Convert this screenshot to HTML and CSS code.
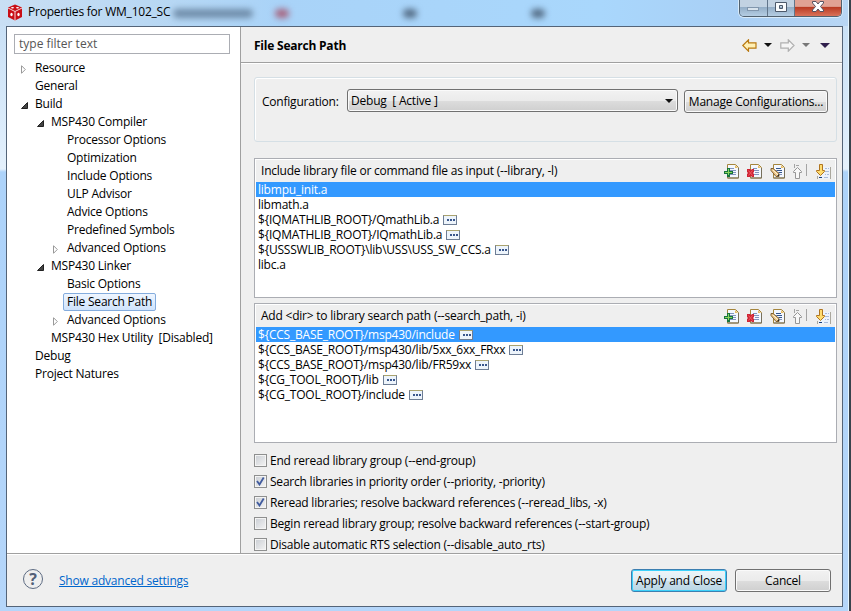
FILE: index.html
```html
<!DOCTYPE html>
<html lang="en">
<head>
  <meta charset="utf-8">
  <title>Properties for WM_102_SC</title>
  <link rel="stylesheet" href="styles.css">
</head>
<body>
  <!-- icons used more than once -->
  <svg class="sprites" width="0" height="0">
    <symbol id="page" viewBox="0 0 15 15">
      <path d="M3.5.5h8l3 3v10.500h-11z" fill="#f4f8ff" stroke="#a5853c"/>
      <path d="M14.500 4v10h-11" fill="none" stroke="#77705c"/>
      <path d="M11 1v3h3z" fill="#e8bd65"/>
      <path d="M6 4.500h4M6 6.500h6M8 8.500h4M6 10.500h6" stroke="#8294bd"/>
    </symbol>
    <symbol id="add" viewBox="0 0 15 15">
      <use href="#page"/>
      <path d="M3 4h3v3h3v3h-3v3h-3v-3h-3v-3h3z" fill="#16743d"/>
      <path d="M4.500 5v6M1 8.500h7" stroke="#8bd45d"/>
    </symbol>
    <symbol id="delete" viewBox="0 0 15 15">
      <use href="#page"/>
      <path d="M0 5h3l1 1 1-1h2v3l-1 1 1 1v3h-2l-1-1-1 1h-3v-3l1-1-1-1z" fill="#cf2435"/>
      <path d="M1.500 6.500l4 5m0-5l-4 5" stroke="#f15860"/>
    </symbol>
    <symbol id="edit" viewBox="0 0 15 15">
      <use href="#page"/>
      <path d="M6 4.500h5M7 6.500h5M9 8.500h3" stroke="#34558c"/>
      <path d="M1 4.500h2l6 5v3h-3l-5-6z" fill="#edc88c" stroke="#806031"/>
      <path d="M3 6l5 5" stroke="#fff1cf"/>
      <path d="M7 12h2v-2z" fill="#222"/>
    </symbol>
    <symbol id="up" viewBox="0 0 15 15">
      <path d="M1.500 0v4M3 1.500h3M13.500 0v12" stroke="#a4a4a4" fill="none"/>
      <path d="M4.500 3.500l4 4v1h-2v6h-4v-6h-2v-1z" fill="#f8f8f8" stroke="#969696"/>
    </symbol>
    <symbol id="down" viewBox="0 0 15 15">
      <path d="M4 3h11v12h-12z" fill="#edf3fc"/>
      <path d="M1.500 12v3M14.500 3v12" stroke="#aaa79d"/>
      <path d="M9 4.500h2M12 4.500h1M9 7.500h4M9 10.500h1M11 10.500h2M8 13.500h4" stroke="#a9bbda"/>
      <path d="M3 13.500h3" stroke="#193f79"/>
      <path d="M3.500.500h3v6h2v1l-4 4-4-4v-1h3z" fill="#ffdc70" stroke="#b07520"/>
    </symbol>
    <symbol id="open" viewBox="0 0 7 7"><path d="M.5 6.500l6-6v6z" fill="#444" stroke="#222"/></symbol>
    <symbol id="closed" viewBox="0 0 5 9"><path d="M.5.700v7.600l3.800-3.800z" fill="#fff" stroke="#999"/></symbol>
    <symbol id="caret" viewBox="0 0 8 4"><path d="M0 0h8l-4 4z" fill="currentColor"/></symbol>
    <symbol id="tick" viewBox="0 0 9 9"><path d="M1 4l2.500 3.500l4.200-7" fill="none" stroke="#405b9e" stroke-width="1.800"/></symbol>
  </svg>

  <div class="window">
    <header class="titlebar">
      <svg class="app-icon" width="16" height="17" viewBox="0 0 16 17">
        <path d="M8 .5l7 3v9.500l-7 3.500-7-3.500v-9.500z" fill="#c90f17"/>
        <path d="M1 4l7 3.500 7-3.500M8 7.500v9" fill="none" stroke="#f6d5d8"/>
        <ellipse cx="5.500" cy="3.800" rx="1.500" ry=".8" fill="#fff"/><ellipse cx="10.500" cy="3.800" rx="1.500" ry=".8" fill="#fff"/>
        <ellipse cx="4.500" cy="10.500" rx="1.200" ry="1.800" fill="#fff"/><ellipse cx="11.500" cy="10.500" rx="1.200" ry="1.800" fill="#fff"/>
      </svg>
      <span class="title">Properties for WM_102_SC</span>
      <div class="smudges"><i></i><i class="red"></i><i></i><i></i></div>
      <div class="controls">
        <span class="control"><svg width="13" height="5"><rect x=".5" y=".5" width="11" height="3" fill="#d8e3ed" stroke="#8196ad"/></svg></span>
        <span class="control maximize"><svg width="12" height="10"><path d="M.5.500h11v9h-11zM4.500 3.500h3v3h-3z" fill="#f9fbfd" fill-rule="evenodd" stroke="#4c596a"/></svg></span>
        <span class="control close"><svg width="12" height="11" viewBox="0 0 12 11"><path d="M.5.500h3.500l2 2.500 2-2.500h3.500v1.500l-3 3.500 3 3.500v1.500h-3.500l-2-2.500-2 2.500h-3.500v-1.500l3-3.500-3-3.500z" fill="#fff" stroke="#565261"/></svg></span>
      </div>
    </header>

    <div class="client">
      <div class="panes">
        <nav class="sidebar">
          <div class="filter">type filter text</div>
          <ul class="tree">
            <li><svg class="closed"><use href="#closed"/></svg><span>Resource</span></li>
            <li><span>General</span></li>
            <li><svg class="open"><use href="#open"/></svg><span>Build</span></li>
            <li class="l2"><svg class="open"><use href="#open"/></svg><span>MSP430 Compiler</span></li>
            <li class="l3"><span>Processor Options</span></li>
            <li class="l3"><span>Optimization</span></li>
            <li class="l3"><span>Include Options</span></li>
            <li class="l3"><span>ULP Advisor</span></li>
            <li class="l3"><span>Advice Options</span></li>
            <li class="l3"><span>Predefined Symbols</span></li>
            <li class="l3"><svg class="closed"><use href="#closed"/></svg><span>Advanced Options</span></li>
            <li class="l2"><svg class="open"><use href="#open"/></svg><span>MSP430 Linker</span></li>
            <li class="l3"><span>Basic Options</span></li>
            <li class="l3"><span class="current">File Search Path</span></li>
            <li class="l3"><svg class="closed"><use href="#closed"/></svg><span>Advanced Options</span></li>
            <li class="l2"><span>MSP430 Hex Utility&nbsp; [Disabled]</span></li>
            <li><span>Debug</span></li>
            <li><span>Project Natures</span></li>
          </ul>
        </nav>

        <main class="page">
          <div class="page-head">
            <h1>File Search Path</h1>
            <div class="history">
              <svg width="15" height="13"><path d="M.8 6.500l5.700-5.700v3h7.500v5.400h-7.500v3z" fill="#fff0b5" stroke="#b97a12" stroke-width="1.200"/></svg>
              <svg class="caret"><use href="#caret"/></svg>
              <svg class="forward" width="15" height="13"><path d="M14 6.500l-5.700-5.700v3h-7.500v5.400h7.500v3z" fill="#f5f5f5" stroke="#b0b0b0" stroke-width="1.200"/></svg>
              <svg class="caret off"><use href="#caret"/></svg>
              <svg class="caret menu"><use href="#caret"/></svg>
            </div>
          </div>

          <div class="content">
            <div class="config">
              <span class="config-label">Configuration:</span>
              <div class="select"><span>Debug&nbsp; [ Active ]</span><svg class="caret"><use href="#caret"/></svg></div>
              <button class="button manage"><span>Manage Configurations...</span></button>
            </div>

            <section class="list">
              <div class="list-head">
                <span>Include library file or command file as input (--library, -l)</span>
                <div class="tools">
                  <svg><use href="#add"/></svg><svg><use href="#delete"/></svg><svg><use href="#edit"/></svg><svg><use href="#up"/></svg><svg><use href="#down"/></svg>
                </div>
              </div>
              <div class="row selected">libmpu_init.a</div>
              <div class="row">libmath.a</div>
              <div class="row"><span class="iq">${IQMATHLIB_ROOT}/QmathLib.a</span><b class="more"></b></div>
              <div class="row"><span class="iq">${IQMATHLIB_ROOT}/IQmathLib.a</span><b class="more"></b></div>
              <div class="row"><span class="uss">${USSSWLIB_ROOT}\lib\USS\USS_SW_CCS.a</span><b class="more"></b></div>
              <div class="row">libc.a</div>
            </section>

            <section class="list">
              <div class="list-head">
                <span>Add &lt;dir&gt; to library search path (--search_path, -i)</span>
                <div class="tools">
                  <svg><use href="#add"/></svg><svg><use href="#delete"/></svg><svg><use href="#edit"/></svg><svg><use href="#up"/></svg><svg><use href="#down"/></svg>
                </div>
              </div>
              <div class="row selected"><span class="ccs">${CCS_BASE_ROOT}/msp430/include</span><b class="more"></b></div>
              <div class="row"><span class="ccs">${CCS_BASE_ROOT}/msp430/lib/5xx_6xx_FRxx</span><b class="more"></b></div>
              <div class="row"><span class="ccs">${CCS_BASE_ROOT}/msp430/lib/FR59xx</span><b class="more"></b></div>
              <div class="row"><span class="cg">${CG_TOOL_ROOT}/lib</span><b class="more"></b></div>
              <div class="row"><span class="cg">${CG_TOOL_ROOT}/include</span><b class="more"></b></div>
            </section>

            <div class="checks">
              <div class="check"><i class="box"></i><span>End reread library group (--end-group)</span></div>
              <div class="check"><i class="box"><svg><use href="#tick"/></svg></i><span>Search libraries in priority order (--priority, -priority)</span></div>
              <div class="check"><i class="box"><svg><use href="#tick"/></svg></i><span>Reread libraries; resolve backward references (--reread_libs, -x)</span></div>
              <div class="check"><i class="box"></i><span>Begin reread library group; resolve backward references (--start-group)</span></div>
              <div class="check"><i class="box"></i><span>Disable automatic RTS selection (--disable_auto_rts)</span></div>
            </div>
          </div>
        </main>
      </div>

      <footer class="footer">
        <span class="help">?</span>
        <a class="advanced">Show advanced settings</a>
        <button class="button primary"><span>Apply and Close</span></button>
        <button class="button"><span>Cancel</span></button>
      </footer>
    </div>
  </div>
</body>
</html>
```
FILE: styles.css
```css
* {
  box-sizing: border-box;
}

body {
  margin: 0;
  width: 851px;
  height: 611px;
  overflow: hidden;
  background: #38434d;
  font-family: "Open Sans", "Noto Sans", sans-serif;
  font-size: 12px;
  letter-spacing: -0.22px;
  color: #000;
}

svg {
  display: block;
  flex: none;
}

.sprites {
  position: absolute;
}

.window {
  width: 849px;
  height: 611px;
  padding: 0 6px 4px;
  border-right: 1px solid #e4f5ff;
  background: linear-gradient(#c5def5 0, #dcecfb 130px, #e4f0fb 169px, #add3fa 172px, #b5d6fa 100%);
}

/* title bar */
.titlebar {
  display: flex;
  height: 26px;
  margin: 0 -6px;
  padding-left: 7px;
  background: linear-gradient(90deg, #c9dff4 0, #b9d8f3 150px, #a9d3f8 280px, #a9d7fc 600px, #a9cff5 740px, #b8d6f4 100%);
}

.app-icon {
  margin-top: 4px;
}

.title {
  width: 143px;
  margin-left: 5px;
  line-height: 24px;
  white-space: nowrap;
}

.smudges {
  display: flex;
  flex: 1;
  gap: 114px;
  padding: 9px 0 0 2px;
}

.smudges i {
  flex: none;
  width: 14px;
  height: 9px;
  border-radius: 5px;
  background: #536b84;
  filter: blur(3px);
}

.smudges i:first-child {
  width: 80px;
  margin-right: -92px;
  background: #6f8ca9;
}

.smudges .red {
  background: #a7637d;
}

.controls {
  display: flex;
  width: 103px;
  height: 17px;
  margin-right: 6px;
  border: 1px solid #51616f;
  border-top: 0;
  border-radius: 0 0 5px 5px;
  box-shadow: 0 0 0 1px #d8eaf9;
  overflow: hidden;
}

.control {
  display: flex;
  justify-content: center;
  width: 28px;
  padding-top: 7px;
  border-right: 1px solid #61758a;
  background: linear-gradient(#c2d2e2 0 45%, #94aec7 46%, #b4cde3);
}

.control.maximize {
  width: 27px;
  padding-top: 2px;
}

.control.close {
  flex: 1;
  padding-top: 1px;
  border: 0;
  background: linear-gradient(#e0a294 0 40%, #b93a22 45%, #d9725a);
}

.client {
  width: 837px;
  height: 581px;
  border: 1px solid #546478;
  background: #efefef;
}

.panes {
  display: flex;
  height: 526px;
}

/* left tree */
.sidebar {
  width: 234px;
  padding: 7px;
  border-right: 1px solid #a0a0a0;
  background: #fff;
}

.filter {
  width: 216px;
  height: 20px;
  padding-left: 4px;
  border: 1px solid #abadb3;
  line-height: 17px;
  color: #555;
  letter-spacing: 0;
}

.tree {
  margin: 5px 0 0;
  padding: 0;
  list-style: none;
}

.tree li {
  display: flex;
  align-items: center;
  justify-content: flex-start;
  height: 18px;
  padding-left: 18px;
  white-space: nowrap;
}

.tree .l2 {
  padding-left: 34px;
}

.tree .l3 {
  padding-left: 50px;
}

.tree span {
  padding: 0 3px;
  line-height: 16px;
}

.tree .open {
  width: 7px;
  height: 7px;
  margin: 3px 4px 0 -11px;
}

.tree .closed {
  width: 5px;
  height: 9px;
  margin: 2px 6px 0 -11px;
}

.tree .current {
  height: 18px;
  margin-left: -1px;
  border: 1px solid #84acdd;
  border-radius: 2px;
  background: linear-gradient(#eff6ff, #cfe3fc);
}

/* right page */
.page {
  flex: 1;
}

.page-head {
  display: flex;
  justify-content: space-between;
  height: 36px;
  padding-left: 13px;
  border-bottom: 1px solid #a0a0a0;
  box-shadow: 0 1px #fff;
}

h1 {
  margin: 0;
  font-size: 12px;
  line-height: 38px;
}

.history {
  display: flex;
  align-items: center;
  padding: 1px 12px 0 0;
}

.caret {
  width: 8px;
  height: 4px;
  color: #111;
}

.history .caret {
  margin-left: 7px;
}

.history .forward {
  margin-left: 8px;
}

.history .off {
  color: #777;
}

.history .menu {
  width: 10px;
  height: 5px;
  margin-left: 10px;
  color: #30204d;
}

.content {
  padding: 14px 5px 0 13px;
}

.config {
  display: flex;
  width: 583px;
  height: 65px;
  margin-bottom: 16px;
  padding: 11px 0 0 7px;
  border: 1px solid #d5dfe5;
  border-radius: 3px;
  box-shadow: inset 1px 1px #fff;
}

.config-label {
  width: 85px;
  line-height: 25px;
}

.select,
.button {
  border: 1px solid #707070;
  border-radius: 3px;
  background: linear-gradient(#f2f2f2 0, #ebebeb 50%, #dddddd 51%, #cfcfcf 100%);
  box-shadow: inset 0 0 0 1px #fafafa;
}

.select {
  display: flex;
  align-items: center;
  justify-content: space-between;
  width: 331px;
  height: 23px;
  padding: 0 4px 0 3px;
}

.button {
  height: 23px;
  padding: 0;
  font: inherit;
  letter-spacing: inherit;
  color: #000;
  white-space: nowrap;
}

.button.manage {
  width: 144px;
  margin: 1px 0 0 6px;
}

/* library lists */
.list {
  width: 583px;
  height: 140px;
  margin-bottom: 5px;
  padding: 1px;
  border: 1px solid #abadb3;
  background: #fff;
}

.list-head {
  display: flex;
  justify-content: space-between;
  height: 22px;
  padding: 0 4px 0 5px;
  background: #efefef;
  line-height: 22px;
}

.tools {
  display: flex;
  gap: 8px;
  padding-top: 4px;
}

.tools svg {
  width: 15px;
  height: 15px;
}

.row {
  display: flex;
  align-items: center;
  height: 15px;
  padding-left: 2px;
  line-height: 15px;
  white-space: nowrap;
}

.row.selected {
  background: #3399ff;
  color: #fff;
}

.more {
  width: 14px;
  height: 10px;
  margin-left: 4px;
  border: 1px solid #6d7d95;
  border-top-color: #aaa36f;
  background:
    linear-gradient(#39568c, #39568c) 3px 3px / 2px 2px no-repeat,
    linear-gradient(#39568c, #39568c) 6px 3px / 2px 2px no-repeat,
    linear-gradient(#39568c, #39568c) 9px 3px / 2px 2px no-repeat,
    #edf4fb;
}

.checks {
  padding-top: 2px;
}

.check {
  display: flex;
  align-items: center;
  height: 21px;
}

.box {
  width: 13px;
  height: 13px;
  margin-right: 3px;
  padding: 1px;
  border: 1px solid #8e8f8f;
  background: linear-gradient(135deg, #c9cdd3, #f4f4f4);
  box-shadow: inset 0 0 0 1px #f4f4f4;
}

.box svg {
  width: 9px;
  height: 9px;
}

/* footer */
.footer {
  display: flex;
  height: 53px;
  padding: 15px 11px 0 16px;
  border-top: 1px solid #a0a0a0;
  box-shadow: inset 0 1px #fff;
}

.help {
  width: 20px;
  height: 20px;
  border: 1px solid #5d6b82;
  border-radius: 50%;
  font-size: 16px;
  font-weight: bold;
  line-height: 18px;
  text-align: center;
  color: #536078;
}

.advanced {
  margin: 0 auto 0 16px;
  line-height: 23px;
  color: #0066cc;
  text-decoration: underline;
}

.footer .button {
  width: 96px;
  margin-left: 8px;
}

.footer .primary {
  border-color: #3c7fb1;
  background: linear-gradient(#edf5f9 0, #e0edf4 50%, #cde1ec 51%, #b9d6e5 100%);
  box-shadow: inset 0 0 0 1px #3bd0fa;
}
```
